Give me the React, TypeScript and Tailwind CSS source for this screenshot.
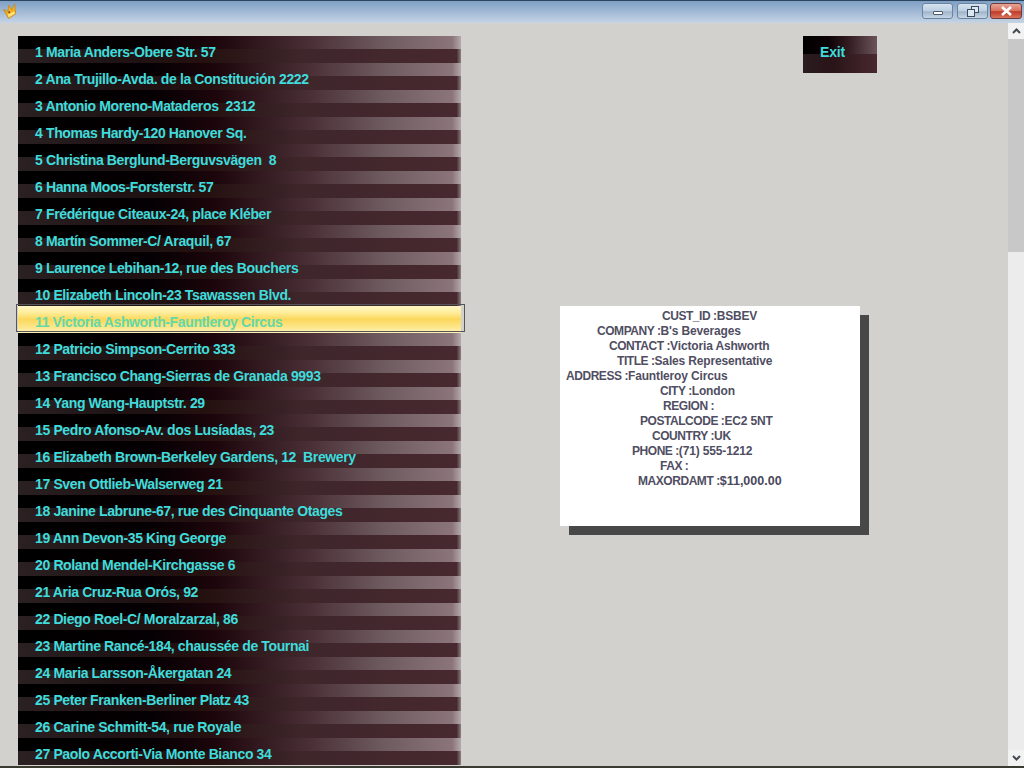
const customers = [
  'Maria Anders-Obere Str. 57',
  'Ana Trujillo-Avda. de la Constitución 2222',
  'Antonio Moreno-Mataderos  2312',
  'Thomas Hardy-120 Hanover Sq.',
  'Christina Berglund-Berguvsvägen  8',
  'Hanna Moos-Forsterstr. 57',
  'Frédérique Citeaux-24, place Kléber',
  'Martín Sommer-C/ Araquil, 67',
  'Laurence Lebihan-12, rue des Bouchers',
  'Elizabeth Lincoln-23 Tsawassen Blvd.',
  'Victoria Ashworth-Fauntleroy Circus',
  'Patricio Simpson-Cerrito 333',
  'Francisco Chang-Sierras de Granada 9993',
  'Yang Wang-Hauptstr. 29',
  'Pedro Afonso-Av. dos Lusíadas, 23',
  'Elizabeth Brown-Berkeley Gardens, 12  Brewery',
  'Sven Ottlieb-Walserweg 21',
  'Janine Labrune-67, rue des Cinquante Otages',
  'Ann Devon-35 King George',
  'Roland Mendel-Kirchgasse 6',
  'Aria Cruz-Rua Orós, 92',
  'Diego Roel-C/ Moralzarzal, 86',
  'Martine Rancé-184, chaussée de Tournai',
  'Maria Larsson-Åkergatan 24',
  'Peter Franken-Berliner Platz 43',
  'Carine Schmitt-54, rue Royale',
  'Paolo Accorti-Via Monte Bianco 34',
];

const details = [
  { label: 'CUST_ID :', value: 'BSBEV', pad: 'pl-[102px]' },
  { label: 'COMPANY :', value: "B's Beverages", pad: 'pl-[37px]' },
  { label: 'CONTACT :', value: 'Victoria Ashworth', pad: 'pl-[49px]' },
  { label: 'TITLE :', value: 'Sales Representative', pad: 'pl-[57px]' },
  { label: 'ADDRESS :', value: 'Fauntleroy Circus', pad: 'pl-[6px]' },
  { label: 'CITY :', value: 'London', pad: 'pl-[100px]' },
  { label: 'REGION :', value: '', pad: 'pl-[103px]' },
  { label: 'POSTALCODE :', value: 'EC2 5NT', pad: 'pl-[80px]' },
  { label: 'COUNTRY :', value: 'UK', pad: 'pl-[92px]' },
  { label: 'PHONE :', value: '(71) 555-1212', pad: 'pl-[72px]' },
  { label: 'FAX :', value: '', pad: 'pl-[100px]' },
  { label: 'MAXORDAMT :', value: '$11,000.00', pad: 'pl-[78px]' },
];

const topBand = 'bg-[linear-gradient(90deg,#000_0%,#050003_30%,#1d060c_45%,#4a3036_66%,#6d5a5e_82%,#8b757a_98%,#b5a9aa_100%)]';
const lowBand = 'bg-[linear-gradient(90deg,#2b2022_0%,#1e1315_22%,#24100f_42%,#3e262b_64%,#47292f_99%,#8d7f80_100%)]';

const CustomerRow = ({ index, text }: { index: number; text: string }) => {
  if (index === 11) {
    return (
      <div className="relative h-[27px] bg-[linear-gradient(180deg,#fff6c4_0%,#ffefa0_22%,#fbd85c_50%,#fde68a_78%,#fff2b8_100%)]">
        <div className="absolute left-[-2px] right-[-4px] top-[-2px] bottom-[1px] border border-[#55555a]" />
        <span className="absolute left-[17px] top-[8px] text-[14px] tracking-[-0.37px] leading-[16px] font-bold text-[#63d8a8] whitespace-pre">{index} {text}</span>
      </div>
    );
  }
  return (
    <div className="relative h-[27px] flex flex-col">
      <div className={`h-[13px] ${topBand}`} />
      <div className={`h-[14px] ${lowBand}`} />
      <span className="absolute left-[17px] top-[8px] text-[14px] tracking-[-0.37px] leading-[16px] font-bold text-[#3fdcdc] whitespace-pre">{index} {text}</span>
    </div>
  );
};

const WindowButton = ({ className, children }: { className: string; children: React.ReactNode }) => (
  <div className={`w-[31px] h-[16px] rounded-[3px] border flex items-center justify-center ${className}`}>{children}</div>
);

export default function App() {
  return (
    <div className="w-[1024px] h-[768px] overflow-hidden flex flex-col bg-[#d3d1ce] font-['Liberation_Sans',Arial,sans-serif]">
      {/* title bar */}
      <div className="h-[23px] shrink-0 flex items-start justify-between border-t border-[#2b4560] bg-[linear-gradient(180deg,#7f9fc4_0%,#9fb7d4_45%,#c6d4e4_100%)]">
        <svg width="18" height="18" viewBox="0 0 18 18" className="ml-[1px] mt-[1px] rotate-[-12deg]">
          <path d="M3 6 L7 9 L9 3 L11 8 L15 3 L14 13 L6 16 Z" fill="#f0b020" stroke="#c98a20" strokeWidth="0.8" />
          <path d="M6 12 L13 10 L13.5 12.5 L6.5 15 Z" fill="#fbe27a" />
          <circle cx="8" cy="10" r="1" fill="#a03c10" />
        </svg>
        <div className="flex mr-[2px] mt-[2px]">
          <WindowButton className="mr-[4px] border-[#6c84a0] bg-[linear-gradient(180deg,#d5e2ef_0%,#bccfe2_50%,#9fb4c9_55%,#c5d6e6_100%)]">
            <div className="w-[10px] h-[4px] mt-[3px] bg-white border border-[#4a5a6c] rounded-[1px]" />
          </WindowButton>
          <WindowButton className="mr-[2px] border-[#6c84a0] bg-[linear-gradient(180deg,#d5e2ef_0%,#bccfe2_50%,#9fb4c9_55%,#c5d6e6_100%)]">
            <svg width="12" height="11" viewBox="0 0 12 11" fill="none" stroke="#3c4c5e" strokeWidth="1">
              <rect x="4.5" y="0.5" width="7" height="6" fill="#dbe6f0" />
              <rect x="0.5" y="3.5" width="7" height="7" fill="#dbe6f0" />
            </svg>
          </WindowButton>
          <WindowButton className="w-[32px] border-[#6e3a3a] bg-[linear-gradient(180deg,#e6a596_0%,#d9705c_48%,#bd3a28_55%,#d9735c_100%)]">
            <svg width="13" height="10" viewBox="0 0 13 10" fill="none" stroke="#fff" strokeWidth="2.6">
              <path d="M2 1 L11 9 M11 1 L2 9" />
            </svg>
          </WindowButton>
        </div>
      </div>

      <div className="flex-1 min-h-0 flex">
        {/* customer list */}
        <div className="w-[443px] ml-[18px] pt-[13px] shrink-0">
          {customers.map((c, i) => (
            <CustomerRow key={i} index={i + 1} text={c} />
          ))}
        </div>

        {/* right side */}
        <div className="w-[399px] ml-[99px] shrink-0 flex flex-col items-start">
          <div className="relative ml-[243px] mt-[13px] w-[74px] h-[37px] flex flex-col">
            <div className="h-[18px] bg-[linear-gradient(90deg,#000_0%,#0d0306_35%,#301a20_60%,#6a5459_100%)]" />
            <div className="h-[19px] bg-[linear-gradient(90deg,#2a1c1f_0%,#2a1418_40%,#47292f_100%)]" />
            <span className="absolute left-[17px] top-[8px] text-[14px] tracking-[-0.2px] leading-[16px] font-bold text-[#3fdcdc]">Exit</span>
          </div>
          <div className="mt-[233px] w-[300px] h-[220px] bg-white pt-[3px] shadow-[9px_9px_0_#484848]">
            {details.map(d => (
              <div key={d.label} className={`h-[15px] text-[12px] tracking-[-0.45px] leading-[15px] font-bold text-[#504e62] whitespace-pre ${d.pad}`}>
                {d.label}
                <span className={d.label === 'MAXORDAMT :' ? 'text-[12.5px] tracking-normal text-[#4a485c]' : 'tracking-[-0.15px]'}>{d.value}</span>
              </div>
            ))}
          </div>
        </div>

        <div className="flex-1" />

        {/* scrollbar */}
        <div className="w-[16px] shrink-0 flex flex-col bg-[#ececec]">
          <div className="h-[16px] flex items-center justify-center bg-[#f2f2f2]">
            <svg width="9" height="6" viewBox="0 0 9 6" fill="none" stroke="#454a50" strokeWidth="2"><path d="M1 5 L4.5 1.5 L8 5" /></svg>
          </div>
          <div className="h-[213px] bg-[#c8c8c8]" />
          <div className="flex-1" />
          <div className="h-[16px] flex items-center justify-center bg-[#f2f2f2]">
            <svg width="9" height="6" viewBox="0 0 9 6" fill="none" stroke="#454a50" strokeWidth="2"><path d="M1 1 L4.5 4.5 L8 1" /></svg>
          </div>
        </div>
      </div>

      <div className="h-[2px] shrink-0 bg-[#3a3a30]" />
    </div>
  );
}
